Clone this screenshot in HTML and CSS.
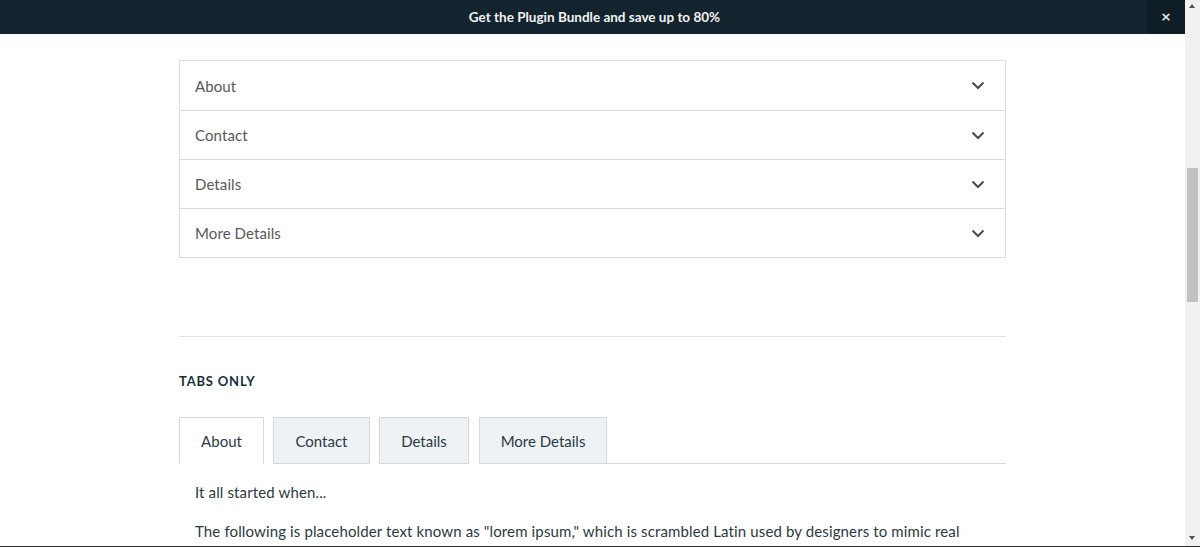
FILE: index.html
```html
<!DOCTYPE html>
<html>
<head>
<meta charset="utf-8">
<link rel="stylesheet" href="styles.css">
</head>
<body>
<div class="frame">
  <div class="page">
    <div class="promo">
      <span class="promo-text">Get the Plugin Bundle and save up to 80%</span>
      <button class="promo-close">×</button>
    </div>
    <main class="content">
      <div class="accordion">
        <div class="acc-row"><span>About</span><svg class="chev" viewBox="0 0 14 9"><path d="M1.5 1.5 L7 7 L12.5 1.5" /></svg></div>
        <div class="acc-row"><span>Contact</span><svg class="chev" viewBox="0 0 14 9"><path d="M1.5 1.5 L7 7 L12.5 1.5" /></svg></div>
        <div class="acc-row"><span>Details</span><svg class="chev" viewBox="0 0 14 9"><path d="M1.5 1.5 L7 7 L12.5 1.5" /></svg></div>
        <div class="acc-row"><span>More Details</span><svg class="chev" viewBox="0 0 14 9"><path d="M1.5 1.5 L7 7 L12.5 1.5" /></svg></div>
      </div>
      <hr class="divider">
      <h3 class="section-title">TABS ONLY</h3>
      <div class="tabs">
        <div class="tab active">About</div>
        <div class="tab t-contact">Contact</div>
        <div class="tab t-details">Details</div>
        <div class="tab t-more">More Details</div>
        <div class="tab-fill"></div>
      </div>
      <div class="tab-panel">
        <p>It all started when...</p>
        <p>The following is placeholder text known as "lorem ipsum," which is scrambled Latin used by designers to mimic real</p>
      </div>
    </main>
  </div>
  <div class="scrollbar">
    <div class="sb-arrow up"></div>
    <div class="sb-track"><div class="sb-thumb"></div></div>
    <div class="sb-arrow down"></div>
  </div>
</div>
<div class="bottom-line"></div>
</body>
</html>
```
FILE: styles.css
```css
html, body {
  margin: 0;
  padding: 0;
}
body {
  width: 1200px;
  height: 547px;
  overflow: hidden;
  font-family: Lato, "Open Sans", sans-serif;
  background: #fff;
  display: flex;
  flex-direction: column;
}
.frame {
  display: flex;
  height: 546px;
  overflow: hidden;
}
.page {
  flex: 0 0 1185px;
  overflow: hidden;
}
.promo {
  height: 34px;
  background: #13242f;
  display: flex;
  align-items: center;
  justify-content: center;
  position: relative;
}
.promo-text {
  color: #f2f2f2;
  font-weight: 700;
  font-size: 13.5px;
  letter-spacing: 0;
  padding-left: 4px;
}
.promo-close {
  position: absolute;
  right: 0;
  top: 0;
  width: 38px;
  height: 34px;
  border: 0;
  background: #0f1d26;
  color: #e8e8e8;
  font-size: 13px;
  font-weight: 700;
  font-family: "DejaVu Sans", sans-serif;
  padding: 0;
  line-height: 32px;
}
.content {
  width: 827px;
  margin: 26px 0 0 179px;
}
.accordion {
  border: 1px solid #dcdcdc;
}
.acc-row {
  height: 48px;
  display: flex;
  align-items: center;
  justify-content: space-between;
  padding: 0 20px 0 15px;
  border-top: 1px solid #dcdcdc;
  color: #585858;
  font-size: 15px;
  letter-spacing: 0.1px;
}
.acc-row:first-child {
  border-top: 0;
  height: 49px;
}
.chev {
  width: 14px;
  height: 9px;
  fill: none;
  stroke: #4a4a4a;
  stroke-width: 2;
}
.divider {
  border: 0;
  border-top: 1px solid #e2e2e2;
  margin: 78px 0 0;
}
.section-title {
  margin: 36px 0 0;
  font-size: 13px;
  font-weight: 700;
  letter-spacing: 0.8px;
  color: #17303b;
  line-height: 16px;
}
.tabs {
  display: flex;
  align-items: flex-end;
  margin-top: 28px;
  height: 47px;
}
.tab {
  box-sizing: border-box;
  height: 47px;
  border: 1px solid #d4d8da;
  background: #eef2f4;
  color: #2b3a42;
  font-size: 15px;
  display: flex;
  align-items: center;
  justify-content: center;
  margin-right: 9px;
  padding: 0;
  white-space: nowrap;
}
.tab.active {
  width: 85px;
  background: #fff;
  border-bottom: 1px solid #fff;
  margin-right: 9px;
}
.t-contact { width: 97px; }
.t-details { width: 90px; margin-right: 10px; }
.t-more { width: 128px; margin-right: 0; }
.tab-fill {
  flex: 1;
  border-bottom: 1px solid #d4d8da;
  height: 0;
}
.tab-panel {
  padding: 0 16px;
  color: #2b3a42;
  font-size: 15px;
  letter-spacing: 0.13px;
}
.tab-panel p {
  margin: 19px 0 0;
  line-height: 20px;
}
.tab-panel p:first-child {
  margin-top: 18px;
}
.scrollbar {
  flex: 0 0 15px;
  background: #f1f1f1;
  display: flex;
  flex-direction: column;
}
.sb-arrow {
  height: 15px;
  position: relative;
}
.sb-arrow::after {
  content: "";
  position: absolute;
  left: 4px;
  width: 0;
  height: 0;
  border-left: 3.5px solid transparent;
  border-right: 3.5px solid transparent;
}
.sb-arrow.up::after {
  top: 4px;
  border-bottom: 4px solid #505050;
}
.sb-arrow.down::after {
  top: 5px;
  border-top: 4px solid #505050;
}
.sb-track {
  flex: 1;
  padding: 153px 2px 0;
}
.sb-thumb {
  height: 134px;
  background: #c1c1c1;
}
.bottom-line {
  height: 1px;
  background: #2a2a2a;
}
```
